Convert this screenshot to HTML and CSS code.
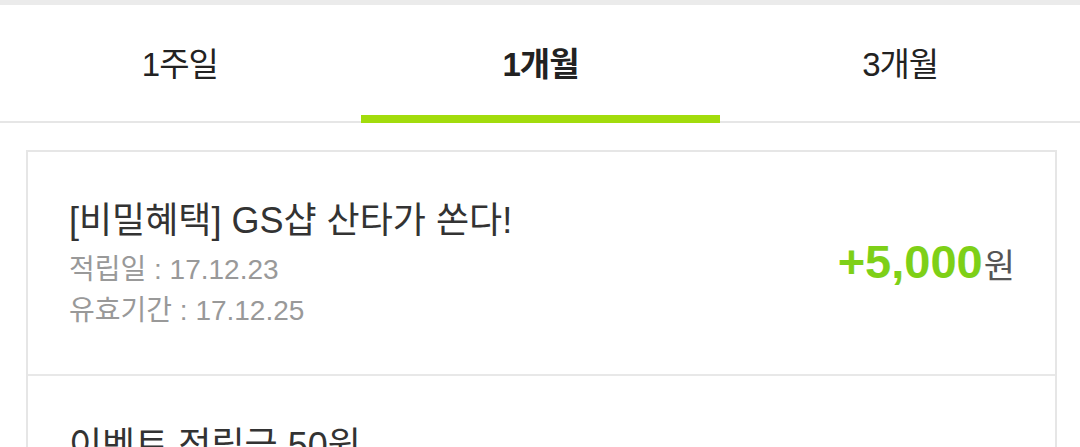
FILE: index.html
```html
<!DOCTYPE html>
<html lang="ko">
<head>
    <meta charset="UTF-8">
    <meta name="viewport" content="width=device-width, initial-scale=1.0">
    <title>적립금 내역</title>
    <link rel="stylesheet" href="styles.css">
</head>
<body>

    <div class="top-strip"></div>

    <!-- 기간 선택 탭 -->
    <nav class="tabs">
        <a class="tab">1주일</a>
        <a class="tab active">1개월</a>
        <a class="tab">3개월</a>
    </nav>

    <!-- 적립금 목록 -->
    <div class="list">
        <div class="item">
            <div class="info">
                <div class="title">[비밀혜택] GS샵 산타가 쏜다!</div>
                <div class="meta">적립일 : 17.12.23</div>
                <div class="meta">유효기간 : 17.12.25</div>
            </div>
            <div class="amount"><span class="num">+5,000</span><span class="unit">원</span></div>
        </div>
        <div class="item">
            <div class="info">
                <div class="title">이벤트 적립금 50원</div>
            </div>
        </div>
    </div>

</body>
</html>
```

FILE: styles.css
```css
body {
    margin: 0;
    background-color: #fff;
    font-family: "Liberation Sans", "Noto Sans CJK KR", sans-serif;
    color: #222;
    overflow: hidden;
}

.top-strip {
    height: 5px;
    background-color: #ebebeb;
}

/* 탭 */
.tabs {
    display: flex;
    height: 116px;
    border-bottom: 2px solid #e6e6e6;
}

.tab {
    flex: 1;
    display: flex;
    align-items: center;
    justify-content: center;
    font-size: 33px;
    letter-spacing: -1px;
    color: #222;
    padding-top: 4px;
    box-sizing: border-box;
    border-bottom: 8px solid transparent;
    margin-bottom: -2px;
}

.tab.active {
    font-weight: bold;
    border-bottom-color: #a2dc0c;
    margin-left: 1px;
}

/* 목록 */
.list {
    margin: 27px 23px 0 26px;
    border: 2px solid #e6e6e6;
    border-bottom: none;
}

.item {
    display: flex;
    align-items: center;
    justify-content: space-between;
    height: 222px;
    padding: 0 40px 0 41px;
    border-bottom: 2px solid #e8e8e8;
}

.item + .item {
    align-items: flex-start;
    padding-top: 44px;
    box-sizing: border-box;
}

.title {
    font-size: 36px;
    line-height: 44px;
    color: #333;
    margin-bottom: 6px;
}

.meta {
    font-size: 28px;
    line-height: 41px;
    color: #999;
}

.info {
    margin-top: 4px;
}

.amount {
    display: flex;
    align-items: baseline;
    margin-top: -4px;
}

.num {
    font-size: 47px;
    font-weight: bold;
    color: #7ed017;
}

.unit {
    font-size: 34px;
    color: #555;
    margin-left: 1px;
}
```
